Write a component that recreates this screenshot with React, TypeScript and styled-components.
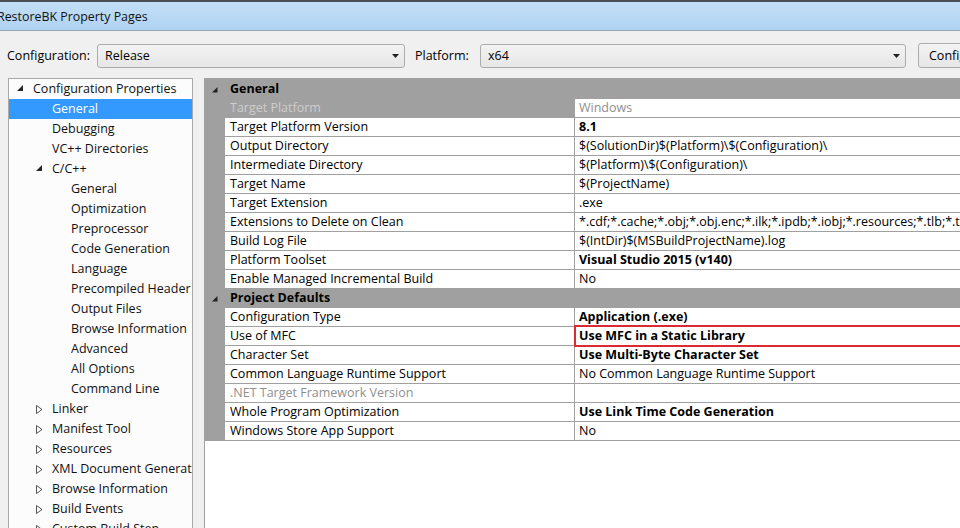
import React from 'react';
import styled, { createGlobalStyle } from 'styled-components';

const GlobalStyle = createGlobalStyle`
    body {
        margin: 0;
        background: #f0f0f0;
        font-family: 'Open Sans', 'Noto Sans', sans-serif;
        font-size: 12.5px;
        color: #000;
        overflow: hidden;
    }
`;

const Window = styled.div`
    width: 960px;
    height: 528px;
    overflow: hidden;
    display: flex;
    flex-direction: column;
    background: #f0f0f0;
`;

const TitleBar = styled.div`
    height: 28px;
    flex: none;
    border-top: 2px solid #4a4e55;
    border-bottom: 1px solid #9aa9b8;
    background: linear-gradient(to bottom, #c4dff6 0%, #b7d7f4 60%, #b0d2f1 100%);
    display: flex;
    align-items: center;
    font-size: 12.4px;
    color: #111;
    span { margin-left: -3px; }
`;

const ConfigRow = styled.div`
    display: flex;
    align-items: center;
    height: 25px;
    margin-top: 12px;
    padding-left: 7px;
    flex: none;
    white-space: nowrap;
`;

const Label = styled.span<{ $width: number }>`
    width: ${p => p.$width}px;
    flex: none;
`;

const Combo = styled.div<{ $width: number }>`
    width: ${p => p.$width}px;
    height: 24px;
    box-sizing: border-box;
    flex: none;
    border: 1px solid #acacac;
    border-radius: 3px;
    background: linear-gradient(to bottom, #f3f3f3, #e6e6e6);
    display: flex;
    align-items: center;
    justify-content: space-between;
    padding: 0 5px 0 7px;
    margin-right: 10px;
`;

const Button = styled.div`
    width: 140px;
    height: 25px;
    box-sizing: border-box;
    flex: none;
    margin-left: 2px;
    border: 1px solid #acacac;
    border-radius: 3px;
    background: linear-gradient(to bottom, #f3f3f3, #e6e6e6);
    display: flex;
    align-items: center;
    padding-left: 10px;
    white-space: nowrap;
`;

const Main = styled.div`
    flex: 1;
    display: flex;
    gap: 11px;
    margin-top: 10px;
    padding-left: 8px;
    min-height: 0;
`;

const Tree = styled.div`
    width: 185px;
    flex: none;
    box-sizing: border-box;
    border: 1px solid #a9a9a9;
    border-bottom: none;
    background: #fcfcfc;
    overflow: hidden;
`;

const TreeItem = styled.div<{ $level: number; $selected?: boolean }>`
    position: relative;
    height: 20px;
    line-height: 20px;
    white-space: nowrap;
    overflow: hidden;
    padding-left: ${p => 24 + p.$level * 19}px;
    background: ${p => (p.$selected ? '#3399ff' : 'transparent')};
    color: ${p => (p.$selected ? '#fff' : '#111')};
    svg {
        position: absolute;
        left: ${p => 8 + p.$level * 19}px;
        top: 6px;
    }
`;

const Grid = styled.div`
    flex: 1;
    box-sizing: border-box;
    border-left: 1px solid #a0a0a0;
    border-top: 1px solid #a0a0a0;
    background: #fff;
    overflow: hidden;
`;

const Row = styled.div<{ $category?: boolean; $first?: boolean }>`
    display: grid;
    grid-template-columns: 20px 350px 1fr;
    height: ${p => (p.$first ? 20 : 19)}px;
    padding-top: ${p => (p.$first ? 1 : 0)}px;
    box-sizing: border-box;
    line-height: 18px;
    white-space: nowrap;
    background: ${p => (p.$category ? '#a0a0a0' : 'transparent')};
    font-weight: ${p => (p.$category ? 700 : 400)};
`;

const Gutter = styled.div`
    background: #a0a0a0;
    display: flex;
    align-items: center;
    justify-content: center;
`;

const NameCell = styled.div<{ $selected?: boolean; $disabled?: boolean }>`
    padding-left: 5px;
    border-bottom: 1px solid #a0a0a0;
    border-right: 1px solid #a0a0a0;
    background: ${p => (p.$selected ? '#a0a0a0' : '#fff')};
    color: ${p => (p.$selected ? '#cdcdcd' : p.$disabled ? '#8f8f8f' : '#000')};
    overflow: hidden;
`;

const ValueCell = styled.div<{ $bold?: boolean; $disabled?: boolean; $marked?: boolean }>`
    position: relative;
    padding-left: 4px;
    border-bottom: 1px solid #a0a0a0;
    font-weight: ${p => (p.$bold ? 700 : 400)};
    color: ${p => (p.$disabled ? '#8f8f8f' : '#000')};
    overflow: ${p => (p.$marked ? 'visible' : 'hidden')};
    ${p =>
        p.$marked &&
        `&::after {
            content: '';
            position: absolute;
            left: -1px;
            right: -4px;
            top: -2px;
            bottom: -2px;
            border: 2px solid #dc2a34;
        }`}
`;

const CategoryTitle = styled.div`
    grid-column: 2 / 4;
    padding-left: 5px;
`;

const Arrow = ({ open }: { open: boolean }) =>
    open ? (
        <svg width="7" height="7" viewBox="0 0 7 7">
            <polygon points="6,0 6,6 0,6" fill="#262626" />
        </svg>
    ) : (
        <svg width="7" height="9" viewBox="0 0 7 9">
            <polygon points="0.5,0.5 6,4.5 0.5,8.5" fill="none" stroke="#555" />
        </svg>
    );

const DropArrow = () => (
    <svg width="7" height="4" viewBox="0 0 7 4">
        <polygon points="0,0 7,0 3.5,4" fill="#222" />
    </svg>
);

const CatArrow = () => (
    <svg width="6" height="6" viewBox="0 0 6 6">
        <polygon points="5.5,0 5.5,5.5 0,5.5" fill="#222" />
    </svg>
);

type Node = { label: string; level: number; arrow?: 'open' | 'closed'; selected?: boolean };

const tree: Node[] = [
    { label: 'Configuration Properties', level: 0, arrow: 'open' },
    { label: 'General', level: 1, selected: true },
    { label: 'Debugging', level: 1 },
    { label: 'VC++ Directories', level: 1 },
    { label: 'C/C++', level: 1, arrow: 'open' },
    { label: 'General', level: 2 },
    { label: 'Optimization', level: 2 },
    { label: 'Preprocessor', level: 2 },
    { label: 'Code Generation', level: 2 },
    { label: 'Language', level: 2 },
    { label: 'Precompiled Header', level: 2 },
    { label: 'Output Files', level: 2 },
    { label: 'Browse Information', level: 2 },
    { label: 'Advanced', level: 2 },
    { label: 'All Options', level: 2 },
    { label: 'Command Line', level: 2 },
    { label: 'Linker', level: 1, arrow: 'closed' },
    { label: 'Manifest Tool', level: 1, arrow: 'closed' },
    { label: 'Resources', level: 1, arrow: 'closed' },
    { label: 'XML Document Generator', level: 1, arrow: 'closed' },
    { label: 'Browse Information', level: 1, arrow: 'closed' },
    { label: 'Build Events', level: 1, arrow: 'closed' },
    { label: 'Custom Build Step', level: 1, arrow: 'closed' },
];

type Prop = { name: string; value: string; bold?: boolean; disabled?: boolean; selected?: boolean; marked?: boolean };

const sections: { title: string; props: Prop[] }[] = [
    {
        title: 'General',
        props: [
            { name: 'Target Platform', value: 'Windows', disabled: true, selected: true },
            { name: 'Target Platform Version', value: '8.1', bold: true },
            { name: 'Output Directory', value: '$(SolutionDir)$(Platform)\\$(Configuration)\\' },
            { name: 'Intermediate Directory', value: '$(Platform)\\$(Configuration)\\' },
            { name: 'Target Name', value: '$(ProjectName)' },
            { name: 'Target Extension', value: '.exe' },
            {
                name: 'Extensions to Delete on Clean',
                value: '*.cdf;*.cache;*.obj;*.obj.enc;*.ilk;*.ipdb;*.iobj;*.resources;*.tlb;*.tli;*.tlh;*.tmp;*.rsp;*.pgc;*.pgd;*.meta',
            },
            { name: 'Build Log File', value: '$(IntDir)$(MSBuildProjectName).log' },
            { name: 'Platform Toolset', value: 'Visual Studio 2015 (v140)', bold: true },
            { name: 'Enable Managed Incremental Build', value: 'No' },
        ],
    },
    {
        title: 'Project Defaults',
        props: [
            { name: 'Configuration Type', value: 'Application (.exe)', bold: true },
            { name: 'Use of MFC', value: 'Use MFC in a Static Library', bold: true, marked: true },
            { name: 'Character Set', value: 'Use Multi-Byte Character Set', bold: true },
            { name: 'Common Language Runtime Support', value: 'No Common Language Runtime Support' },
            { name: '.NET Target Framework Version', value: '', disabled: true },
            { name: 'Whole Program Optimization', value: 'Use Link Time Code Generation', bold: true },
            { name: 'Windows Store App Support', value: 'No' },
        ],
    },
];

export default function App() {
    return (
        <Window>
            <GlobalStyle />
            <TitleBar>
                <span>RestoreBK Property Pages</span>
            </TitleBar>
            <ConfigRow>
                <Label $width={90}>Configuration:</Label>
                <Combo $width={308}>
                    <span>Release</span>
                    <DropArrow />
                </Combo>
                <Label $width={65}>Platform:</Label>
                <Combo $width={426}>
                    <span>x64</span>
                    <DropArrow />
                </Combo>
                <Button>Configuration Manager...</Button>
            </ConfigRow>
            <Main>
                <Tree>
                    {tree.map((n, i) => (
                        <TreeItem key={i} $level={n.level} $selected={n.selected}>
                            {n.arrow && <Arrow open={n.arrow === 'open'} />}
                            {n.label}
                        </TreeItem>
                    ))}
                </Tree>
                <Grid>
                    {sections.map((section, si) => (
                        <React.Fragment key={section.title}>
                            <Row $category $first={si === 0}>
                                <Gutter>
                                    <CatArrow />
                                </Gutter>
                                <CategoryTitle>{section.title}</CategoryTitle>
                            </Row>
                            {section.props.map(p => (
                                <Row key={p.name}>
                                    <Gutter />
                                    <NameCell $selected={p.selected} $disabled={p.disabled}>
                                        {p.name}
                                    </NameCell>
                                    <ValueCell $bold={p.bold} $disabled={p.disabled} $marked={p.marked}>
                                        {p.value}
                                    </ValueCell>
                                </Row>
                            ))}
                        </React.Fragment>
                    ))}
                </Grid>
            </Main>
        </Window>
    );
}
